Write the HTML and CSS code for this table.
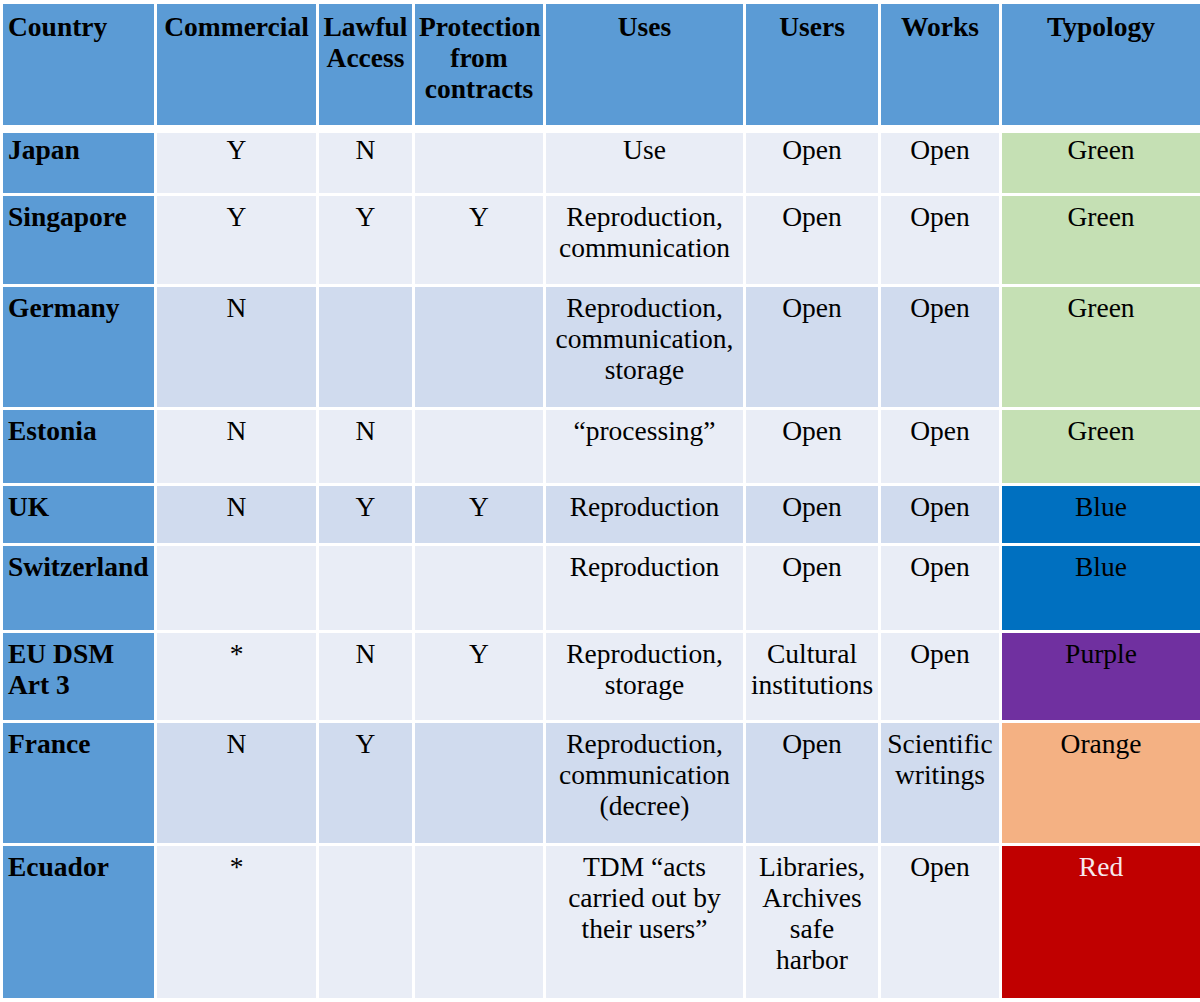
FILE: index.html
```html
<!DOCTYPE html>
<html lang="en">
<head>
<meta charset="utf-8">
<title>TDM exceptions typology</title>
<link rel="stylesheet" href="styles.css">
</head>
<body>
<div class="grid" role="table">
  <div class="cell head left">Country</div>
  <div class="cell head">Commercial</div>
  <div class="cell head">Lawful<br>Access</div>
  <div class="cell head">Protection<br>from<br>contracts</div>
  <div class="cell head">Uses</div>
  <div class="cell head">Users</div>
  <div class="cell head">Works</div>
  <div class="cell head">Typology</div>

  <div class="cell country tight">Japan</div>
  <div class="cell lt tight">Y</div>
  <div class="cell lt tight">N</div>
  <div class="cell lt tight"></div>
  <div class="cell lt tight">Use</div>
  <div class="cell lt tight">Open</div>
  <div class="cell lt tight">Open</div>
  <div class="cell green tight">Green</div>

  <div class="cell country">Singapore</div>
  <div class="cell lt">Y</div>
  <div class="cell lt">Y</div>
  <div class="cell lt">Y</div>
  <div class="cell lt">Reproduction,<br>communication</div>
  <div class="cell lt">Open</div>
  <div class="cell lt">Open</div>
  <div class="cell green">Green</div>

  <div class="cell country">Germany</div>
  <div class="cell dk">N</div>
  <div class="cell dk"></div>
  <div class="cell dk"></div>
  <div class="cell dk">Reproduction,<br>communication,<br>storage</div>
  <div class="cell dk">Open</div>
  <div class="cell dk">Open</div>
  <div class="cell green">Green</div>

  <div class="cell country">Estonia</div>
  <div class="cell lt">N</div>
  <div class="cell lt">N</div>
  <div class="cell lt"></div>
  <div class="cell lt">“processing”</div>
  <div class="cell lt">Open</div>
  <div class="cell lt">Open</div>
  <div class="cell green">Green</div>

  <div class="cell country">UK</div>
  <div class="cell dk">N</div>
  <div class="cell dk">Y</div>
  <div class="cell dk">Y</div>
  <div class="cell dk">Reproduction</div>
  <div class="cell dk">Open</div>
  <div class="cell dk">Open</div>
  <div class="cell blue">Blue</div>

  <div class="cell country">Switzerland</div>
  <div class="cell lt"></div>
  <div class="cell lt"></div>
  <div class="cell lt"></div>
  <div class="cell lt">Reproduction</div>
  <div class="cell lt">Open</div>
  <div class="cell lt">Open</div>
  <div class="cell blue">Blue</div>

  <div class="cell country">EU DSM<br>Art 3</div>
  <div class="cell lt">*</div>
  <div class="cell lt">N</div>
  <div class="cell lt">Y</div>
  <div class="cell lt">Reproduction,<br>storage</div>
  <div class="cell lt">Cultural<br>institutions</div>
  <div class="cell lt">Open</div>
  <div class="cell purple">Purple</div>

  <div class="cell country">France</div>
  <div class="cell dk">N</div>
  <div class="cell dk">Y</div>
  <div class="cell dk"></div>
  <div class="cell dk">Reproduction,<br>communication<br>(decree)</div>
  <div class="cell dk">Open</div>
  <div class="cell dk">Scientific<br>writings</div>
  <div class="cell orange">Orange</div>

  <div class="cell country">Ecuador</div>
  <div class="cell lt">*</div>
  <div class="cell lt"></div>
  <div class="cell lt"></div>
  <div class="cell lt">TDM “acts<br>carried out by<br>their users”</div>
  <div class="cell lt">Libraries,<br>Archives<br>safe<br>harbor</div>
  <div class="cell lt">Open</div>
  <div class="cell red">Red</div>
</div>
</body>
</html>
```

FILE: styles.css
```css
html, body {
  margin: 0;
  padding: 0;
  background: #ffffff;
}

body {
  font-family: "Liberation Serif", "Times New Roman", serif;
  font-size: 27.5px;
  color: #000000;
  overflow: hidden;
}

.grid {
  display: grid;
  grid-template-columns: 151px 159px 93px 128px 197px 132px 118px 198px;
  grid-template-rows: 126px 60px 88px 120px 73px 57px 84px 87px 120px 152px;
  column-gap: 3px;
  row-gap: 3px;
  padding: 4px 0 0 3px;
}

.cell {
  padding: 5px 4px 0 4px;
  text-align: center;
  line-height: 31px;
  box-sizing: border-box;
}

.head {
  background: #5b9bd5;
  font-weight: bold;
  padding-top: 7px;
  margin-bottom: 5px;
}

.tight {
  padding-top: 1px;
}

.left {
  text-align: left;
  padding-left: 5px;
}

.country {
  background: #5b9bd5;
  font-weight: bold;
  text-align: left;
  padding-left: 5px;
}

.lt { background: #e9edf6; }
.dk { background: #d0dbee; }

.green { background: #c5e0b4; }
.blue { background: #0070c0; }
.purple { background: #7030a0; }
.orange { background: #f4b183; }
.red { background: #c00000; color: #f6e8ec; }
```
